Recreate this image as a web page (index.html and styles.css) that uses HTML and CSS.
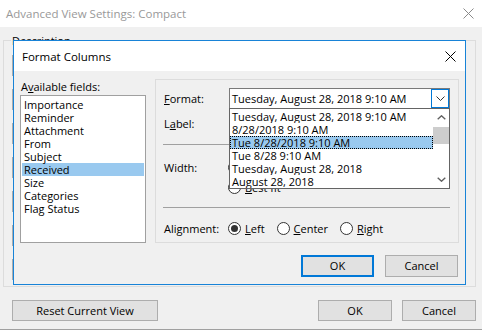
FILE: index.html
```html
<!DOCTYPE html>
<html>
<head>
<meta charset="utf-8">
<title>Format Columns</title>
<link rel="stylesheet" href="styles.css">
</head>
<body>
<div class="window">
  <div class="titlebar">
    <span class="title">Advanced View Settings: Compact</span>
    <svg class="close-icon" width="11" height="11" viewBox="0 0 11 11"><path d="M0.5 0.5L10.5 10.5M10.5 0.5L0.5 10.5" stroke="#8a8a8a" stroke-width="1" fill="none"/></svg>
  </div>
  <div class="content">
    <fieldset class="group">
      <legend>Description</legend>
      <div class="desc-rows">
        <div class="desc-row"><span class="btn desc-btn"></span></div>
        <div class="desc-row"><span class="btn desc-btn"></span></div>
        <div class="desc-row"><span class="btn desc-btn"></span></div>
        <div class="desc-row"><span class="btn desc-btn"></span></div>
        <div class="desc-row"><span class="btn desc-btn"></span></div>
        <div class="desc-row"><span class="btn desc-btn"></span></div>
        <div class="desc-row"><span class="btn desc-btn"></span></div>
      </div>
    </fieldset>
    <div class="footer">
      <button class="btn reset-btn">Reset Current View</button>
      <div class="spacer"></div>
      <button class="btn foot-btn">OK</button>
      <button class="btn foot-btn">Cancel</button>
    </div>
  </div>
</div>

<div class="dialog">
  <div class="dlg-title">
    <span>Format Columns</span>
    <svg class="close-icon" width="11" height="11" viewBox="0 0 11 11"><path d="M0.5 0.5L10.5 10.5M10.5 0.5L0.5 10.5" stroke="#000" stroke-width="1" fill="none"/></svg>
  </div>
  <div class="dlg-body">
    <div class="dlg-main">
      <div class="fields">
        <div class="fields-label">A<u>v</u>ailable fields:</div>
        <ul class="listbox">
          <li>Importance</li>
          <li>Reminder</li>
          <li>Attachment</li>
          <li>From</li>
          <li>Subject</li>
          <li class="sel">Received</li>
          <li>Size</li>
          <li>Categories</li>
          <li>Flag Status</li>
        </ul>
      </div>
      <div class="panel">
        <div class="prow">
          <span class="plabel"><u>F</u>ormat:</span>
          <div class="combo">
            <span class="combo-text">Tuesday, August 28, 2018 9:10 AM</span>
            <span class="combo-btn"><svg width="9" height="5" viewBox="0 0 9 5"><path d="M0.5 0.5L4.5 4.5L8.5 0.5" stroke="#333" stroke-width="1" fill="none"/></svg></span>
          </div>
        </div>
        <div class="prow row-label">
          <span class="plabel">L<u>a</u>bel:</span>
          <div class="textbox"></div>
        </div>
        <div class="sep sep-1"></div>
        <div class="prow row-width">
          <span class="plabel">Width:</span>
          <span class="radio checked"><span class="circle"></span></span>
        </div>
        <div class="prow row-bestfit">
          <span class="plabel"></span>
          <label class="radio"><span class="circle"></span><span class="rtext"><u>B</u>est fit</span></label>
        </div>
        <div class="sep sep-2"></div>
        <div class="prow row-align">
          <span class="plabel">Alignment:</span>
          <label class="radio checked"><span class="circle"></span><span class="rtext"><u>L</u>eft</span></label>
          <label class="radio"><span class="circle"></span><span class="rtext"><u>C</u>enter</span></label>
          <label class="radio"><span class="circle"></span><span class="rtext"><u>R</u>ight</span></label>
        </div>

        <div class="dropdown">
          <ul class="dd-list">
            <li>Tuesday, August 28, 2018 9:10 AM</li>
            <li>8/28/2018 9:10 AM</li>
            <li class="sel">Tue 8/28/2018 9:10 AM</li>
            <li>Tue 8/28 9:10 AM</li>
            <li>Tuesday, August 28, 2018</li>
            <li>August 28, 2018</li>
          </ul>
          <div class="scrollbar">
            <div class="sb-btn"><svg width="9" height="5" viewBox="0 0 9 5"><path d="M0.7 4.3L4.5 0.8L8.3 4.3" stroke="#606060" stroke-width="1.4" fill="none"/></svg></div>
            <div class="sb-track"><div class="sb-thumb"></div></div>
            <div class="sb-btn"><svg width="9" height="5" viewBox="0 0 9 5"><path d="M0.7 0.7L4.5 4.2L8.3 0.7" stroke="#606060" stroke-width="1.4" fill="none"/></svg></div>
          </div>
        </div>
      </div>
    </div>
    <div class="dlg-buttons">
      <button class="btn dlg-btn ok">OK</button>
      <button class="btn dlg-btn">Cancel</button>
    </div>
  </div>
</div>
</body>
</html>
```

FILE: styles.css
```css
* { box-sizing: border-box; }
html, body { margin: 0; padding: 0; }
body {
  width: 482px;
  height: 332px;
  position: relative;
  overflow: hidden;
  background: #fff;
  font-family: "Open Sans", "Noto Sans", sans-serif;
  font-size: 11px;
  color: #000;
}
u { text-decoration: underline; text-underline-offset: 1px; }

.window {
  height: 330px;
  display: flex;
  flex-direction: column;
  background: #f0f0f0;
  border-bottom: 1px solid #a0a0a0;
}
.titlebar {
  height: 27px;
  flex: none;
  background: #fff;
  display: flex;
  align-items: center;
  justify-content: space-between;
  padding: 0 8px 1px 6px;
}
.title { color: #999; font-size: 11.5px; }
.close-icon { display: block; }

.content {
  flex: 1;
  display: flex;
  flex-direction: column;
  padding: 6px 6px 0 3px;
}
.group {
  margin: 0;
  padding: 0;
  width: 473px;
  height: 254px;
  min-width: 0;
  border: 1px solid #dcdcdc;
}
.group legend {
  margin-left: 7px;
  padding: 0 1px;
  line-height: 15px;
}
.desc-rows {
  margin: 7px 0 0 8px;
  display: flex;
  flex-direction: column;
  gap: 13px;
}
.desc-row { display: flex; align-items: center; }

.btn {
  font-family: inherit;
  font-size: 11px;
  color: #000;
  background: #e1e1e1;
  border: 1px solid #adadad;
  padding: 0;
  margin: 0;
  height: 21px;
  line-height: 19px;
}
.desc-btn { display: block; width: 140px; }

.footer {
  margin-top: 13px;
  padding-left: 9px;
  display: flex;
  gap: 10px;
}
.spacer { flex: 1; }
.reset-btn { width: 146px; }
.foot-btn { width: 74px; }

/* Format Columns dialog, modal over the window */
.dialog {
  position: absolute;
  left: 13px;
  top: 40px;
  width: 453px;
  height: 245px;
  border: 1px solid #1883d7;
  background: #f0f0f0;
  display: flex;
  flex-direction: column;
}
.dlg-title {
  height: 30px;
  flex: none;
  background: #fff;
  display: flex;
  align-items: center;
  justify-content: space-between;
  padding: 0 9px 0 8px;
  font-size: 11.5px;
}
.dlg-body {
  flex: 1;
  padding: 8px 6px 7px 6px;
  display: flex;
  flex-direction: column;
}
.dlg-main {
  display: flex;
  gap: 9px;
  height: 164px;
}
.fields { width: 126px; display: flex; flex-direction: column; }
.fields-label { height: 16px; line-height: 16px; padding-left: 1px; }
.listbox {
  list-style: none;
  margin: 0;
  padding: 2px 1px 0 1px;
  flex: 1;
  background: #fff;
  border: 1px solid #a0a0a0;
}
.listbox li { height: 13px; line-height: 13px; padding-left: 2px; }
.listbox li.sel { background: #99c9ef; }

.panel {
  position: relative;
  width: 304px;
  border: 1px solid #dcdcdc;
  padding: 8px 8px 0 7px;
}
.prow { display: flex; align-items: center; height: 21px; }
.plabel { width: 66px; flex: none; padding-left: 1px; }
.row-label { margin-top: 4px; }
.row-width { margin-top: 12px; }
.row-bestfit { margin-top: 3px; height: 13px; }
.row-align { margin-top: 10px; }
.sep { height: 1px; background: #a0a0a0; }
.sep-1 { margin-top: 10px; }
.sep-2 { margin-top: 13px; }

.combo {
  width: 221px;
  height: 21px;
  border: 1px solid #7a7a7a;
  background: #fff;
  display: flex;
  align-items: center;
  padding-left: 2px;
}
.combo-btn {
  margin-left: auto;
  width: 18px;
  height: 19px;
  border: 1px solid #0078d7;
  display: flex;
  align-items: center;
  justify-content: center;
}
.textbox {
  width: 221px;
  height: 21px;
  border: 1px solid #7a7a7a;
  background: #fff;
}

.radio { display: flex; align-items: center; margin-right: 12px; }
.radio .circle {
  flex: none;
  width: 13px;
  height: 13px;
  border-radius: 50%;
  border: 1px solid #333;
  background: #fff;
  display: flex;
  align-items: center;
  justify-content: center;
}
.radio .rtext { margin-left: 4px; }
.radio.checked .circle::after {
  content: "";
  width: 7px;
  height: 7px;
  border-radius: 50%;
  background: #333;
}
.row-width .radio, .row-bestfit .radio, .row-align .radio:first-of-type { margin-left: -1px; }

.dropdown {
  position: absolute;
  left: 73px;
  top: 28px;
  width: 221px;
  height: 81px;
  z-index: 2;
  border: 1px solid #646464;
  background: #fff;
  display: flex;
}
.dd-list {
  list-style: none;
  margin: 0;
  padding: 1px 0 0 0;
  flex: 1;
}
.dd-list li {
  height: 13px;
  line-height: 13px;
  padding-left: 2px;
  white-space: nowrap;
  overflow: hidden;
}
.dd-list li.sel {
  background: #99c9ef;
  outline: 1px dotted #000;
  outline-offset: -1px;
}
.scrollbar {
  width: 16px;
  display: flex;
  flex-direction: column;
  background: #fff;
}
.sb-btn {
  height: 17px;
  display: flex;
  align-items: center;
  justify-content: center;
}
.sb-btn svg { display: block; }
.sb-track { flex: 1; padding-top: 1px; }
.sb-thumb { height: 17px; background: #cdcdcd; }

.dlg-buttons {
  margin-top: 12px;
  display: flex;
  justify-content: flex-end;
  gap: 11px;
  padding-right: 1px;
}
.dlg-btn { width: 73px; height: 22px; line-height: 20px; }
.dlg-btn.ok { border: 2px solid #0078d7; line-height: 18px; }
```
